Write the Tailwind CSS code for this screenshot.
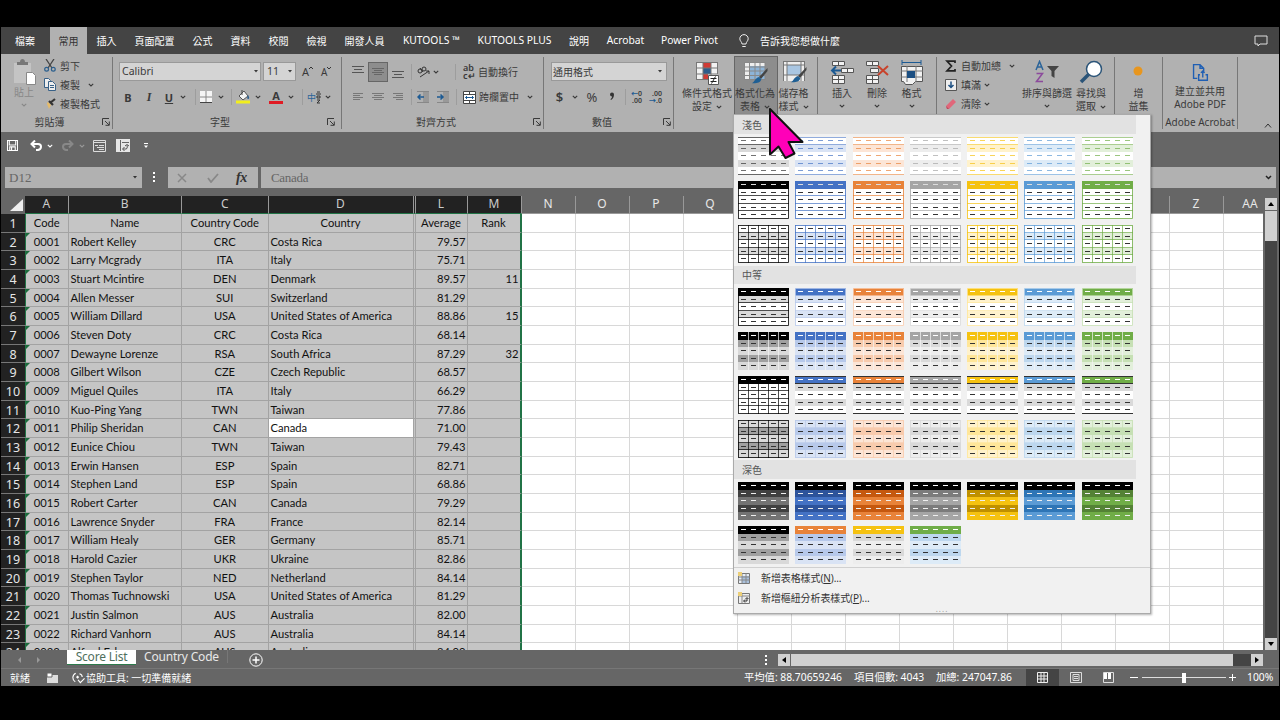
<!DOCTYPE html>
<html lang="zh-Hant">
<head>
    <meta charset="UTF-8">
    <meta name="viewport" content="width=device-width, initial-scale=1.0">
    <title>Score List</title>
    <script src="https://cdn.jsdelivr.net/npm/@tailwindcss/browser@4"></script>
</head>
<body class="bg-black overflow-hidden font-['Noto_Sans','Noto_Sans_CJK_TC',sans-serif]">
    <!-- Shared icons -->
    <svg class="hidden">
        <symbol id="chev" viewBox="0 0 6 4"><path d="M.8 .8L3 3L5.2 .8" fill="none" stroke="currentColor" stroke-width="1.1"/></symbol>
        <symbol id="launch" viewBox="0 0 8 8"><path d="M.5 7V.5H7M3 3l4 4M7.3 3.5v3.8H3.5" fill="none" stroke="currentColor"/></symbol>
        <symbol id="caret" viewBox="0 0 4 3"><path d="M0 0h4L2 2.6z" fill="currentColor"/></symbol>
        <symbol id="brush" viewBox="0 0 16 16"><path d="M15.5 0v3L9 11 7 9z" fill="#444"/><path d="M7 9l2.3 2.3C8.5 15 4 15.500 0 15.200 3 13.500 3 10 7 9z" fill="#1f5f94"/></symbol>
    </svg>

    <div class="relative w-[1280px] h-[720px] pt-[27px] pl-px overflow-hidden">
        <div class="w-[1278px] h-[659px] flex flex-col overflow-hidden bg-[#666]">

            <!-- Ribbon tabs -->
            <div class="h-[27px] shrink-0 flex items-center bg-[#444] text-white text-[10px] leading-none whitespace-nowrap text-center">
                <div class="w-[48px]">檔案</div>
                <div class="w-[37px] h-full flex items-center justify-center bg-[#b1b1b1] text-[#333] ml-px">常用</div>
                <div class="w-[39px]">插入</div>
                <div class="w-[57px]">頁面配置</div>
                <div class="w-[39px]">公式</div>
                <div class="w-[37px]">資料</div>
                <div class="w-[39px]">校閱</div>
                <div class="w-[37px]">檢視</div>
                <div class="w-[59px]">開發人員</div>
                <div class="w-[75px] text-[10.300px]">KUTOOLS ™</div>
                <div class="w-[91px] text-[10.300px]">KUTOOLS PLUS</div>
                <div class="w-[38px]">說明</div>
                <div class="w-[55px] text-[10.300px]">Acrobat</div>
                <div class="w-[73px] text-[10.300px]">Power Pivot</div>
                <svg class="w-[10px] h-[14px] ml-[13px]" viewBox="0 0 10 14" fill="none" stroke="#eee"><path d="M3 10C3 8 .8 7 .8 4.800a4.200 4.200 0 018.400 0C9.200 7 7 8 7 10zM3.300 12.500h3.400"/></svg>
                <div class="ml-[11px]">告訴我您想做什麼</div>
                <svg class="w-[14px] h-[12px] ml-auto mr-[11px]" viewBox="0 0 14 12" fill="none" stroke="#ddd"><path d="M1 1h12v8H6l-2 2V9H1z"/></svg>
            </div>

            <!-- Ribbon -->
            <div class="h-[78px] shrink-0 flex items-start pt-[3px] bg-[#b1b1b1] text-[#3a3a3a] text-[10px] leading-none whitespace-nowrap">
                <!-- Clipboard -->
                <div class="w-[112px] h-[72px] border-r border-[#777] flex flex-col">
                    <div class="flex h-[60px]">
                        <div class="w-[43px] flex flex-col items-center pl-[3px] text-[#888]">
                            <svg class="w-[23px] h-[27px] mt-[2px]" viewBox="0 0 23 27"><path d="M1 4h17v20H1z" fill="#c4c4c4"/><path d="M4 3h3c0-4 5-4 5 0h3v3H4z" fill="#777"/><path d="M13.500 13.500h6l3 3v9h-9z" fill="#fff" stroke="#888"/></svg>
                            <div class="mt-px">貼上</div>
                            <svg class="w-[6px] h-[4px] mt-[6px]"><use href="#chev"/></svg>
                        </div>
                        <div class="flex flex-col">
                            <div class="h-[17px] flex items-center">
                                <svg class="w-[12px] h-[13px]" viewBox="0 0 12 13" fill="none"><path d="M2 0l6 9M10 0L4 9" stroke="#444" stroke-width="1.300"/><circle cx="2.600" cy="10.300" r="1.900" stroke="#2b5f8e" stroke-width="1.200"/><circle cx="9.300" cy="10.300" r="1.900" stroke="#2b5f8e" stroke-width="1.200"/></svg>
                                <span class="ml-[4px]">剪下</span>
                            </div>
                            <div class="h-[21px] flex items-center">
                                <svg class="w-[12px] h-[13px]" viewBox="0 0 12 13" fill="#eee" stroke="#386187"><path d="M.5 .5h4l2 2v7h-6z"/><path d="M4.500 3.500h4l3 3v6h-7zM6 7.500h4M6 9.500h4"/></svg>
                                <span class="ml-[4px]">複製</span>
                                <svg class="w-[6px] h-[4px] ml-[8px]"><use href="#chev"/></svg>
                            </div>
                            <div class="h-[18px] flex items-center">
                                <svg class="w-[12px] h-[12px]" viewBox="0 0 12 12"><path d="M4 4l3 3-2 4C4 8 3 7 3 5z" fill="#e6bb69"/><path d="M5 3l4 4M6 5l5-4" stroke="#333" stroke-width="2.200"/></svg>
                                <span class="ml-[4px]">複製格式</span>
                            </div>
                        </div>
                    </div>
                    <div class="h-[14px] flex items-center"><span class="w-[97px] text-center">剪貼簿</span><svg class="w-[8px] h-[8px] ml-[4px]"><use href="#launch"/></svg></div>
                </div>

                <!-- Font -->
                <div class="w-[229px] h-[72px] border-r border-[#777] flex flex-col">
                    <div class="h-[30px] flex items-center pl-[6px]">
                        <div class="w-[142px] h-[19px] bg-[#d4d4d4] border border-[#999] flex items-center justify-between px-[2px] text-[10.500px]">Calibri<svg class="w-[4px] h-[3px]"><use href="#caret"/></svg></div>
                        <div class="w-[33px] h-[19px] ml-[2px] bg-[#d4d4d4] border border-[#999] flex items-center justify-between px-[3px] text-[10.500px]">11<svg class="w-[4px] h-[3px]"><use href="#caret"/></svg></div>
                        <div class="ml-[6px] w-[12px] text-[11px] flex">A<svg class="w-[4px] h-[3px]" viewBox="0 0 4 3"><path d="M0 3l2-2 2 2" fill="none" stroke="#333"/></svg></div>
                        <div class="ml-[7px] w-[12px] text-[10px] flex">A<svg class="w-[4px] h-[3px]" viewBox="0 0 4 3"><path d="M0 0l2 2 2-2" fill="none" stroke="#333"/></svg></div>
                    </div>
                    <div class="h-[23px] flex items-center pl-[6px] text-center">
                        <b class="w-[18px] text-[11px]">B</b>
                        <b class="w-[24px] text-[12px] italic font-['Liberation_Serif']">I</b>
                        <b class="w-[16px] text-[11px] underline">U</b>
                        <svg class="w-[6px] h-[4px] ml-[3px]"><use href="#chev"/></svg>
                        <i class="w-px h-[16px] bg-[#9d9d9d] ml-[9px]"></i>
                        <svg class="w-[12px] h-[12px] ml-[4px]" viewBox="0 0 12 12"><path d="M0 0h12v12H0z" fill="#f5f5f5"/><path d="M6 0v12M0 6h12" stroke="#888"/><path d="M0 11.500h12" stroke="#444"/></svg>
                        <svg class="w-[6px] h-[4px] ml-[6px]"><use href="#chev"/></svg>
                        <i class="w-px h-[16px] bg-[#9d9d9d] ml-[7px]"></i>
                        <svg class="w-[14px] h-[14px] ml-[4px]" viewBox="0 0 14 14"><path d="M3 6l5-5 4 5-5 4z" fill="#f4f4f4" stroke="#555"/><path d="M6 0v5" stroke="#444"/><path d="M12 5c2 3 1 4 0 4s-1-2 0-4" fill="#2c5f8f"/><path d="M0 10.500h14v3H0z" fill="#f2ee1c"/></svg>
                        <svg class="w-[6px] h-[4px] ml-[5px]"><use href="#chev"/></svg>
                        <div class="ml-[8px] w-[14px] h-[14px] border-b-3 border-[#e01b24] text-[11px] font-bold leading-[11px]">A</div>
                        <svg class="w-[6px] h-[4px] ml-[5px]"><use href="#chev"/></svg>
                        <i class="w-px h-[16px] bg-[#9d9d9d] ml-[8px]"></i>
                        <div class="ml-[4px] w-[14px] flex items-center text-[#2b6499] text-[9px]">中<svg class="w-[5px] h-[13px]" viewBox="0 0 5 13" fill="none" stroke="#333"><path d="M1 1h3M0 3h5M1 5h3v2H1zM1 9h3l-3 3h3"/></svg></div>
                        <svg class="w-[6px] h-[4px] ml-[4px]"><use href="#chev"/></svg>
                    </div>
                    <div class="h-[14px] mt-[7px] flex items-center"><span class="w-[214px] text-center">字型</span><svg class="w-[8px] h-[8px]"><use href="#launch"/></svg></div>
                </div>

                <!-- Alignment -->
                <div class="w-[202px] h-[72px] border-r border-[#777] flex flex-col">
                    <div class="h-[30px] flex items-center pl-[6px]">
                        <svg class="w-[20px] h-[20px]" viewBox="0 0 20 20" stroke="#555"><path d="M4 4.500h12M6 7.500h8M4 10.500h12"/></svg>
                        <div class="w-[20px] h-[20px] bg-[#8d8d8d] border border-[#666]"><svg class="w-[18px] h-[18px]" viewBox="0 0 18 18" stroke="#666"><path d="M3 5.500h12M5 7.500h8M3 9.500h12M5 11.500h8"/></svg></div>
                        <svg class="w-[20px] h-[20px]" viewBox="0 0 20 20" stroke="#555"><path d="M4 9.500h12M6 12.500h8M4 15.500h12"/></svg>
                        <i class="w-px h-[16px] bg-[#9d9d9d] ml-[3px]"></i>
                        <svg class="w-[13px] h-[12px] ml-[5px]" viewBox="0 0 13 12" fill="none" stroke="#333"><circle cx="3" cy="5" r="2"/><path d="M3 2l3 4"/><circle cx="7" cy="3" r="2"/><path d="M3 11l9-6M12 8V5H9"/></svg>
                        <svg class="w-[6px] h-[4px] ml-[3px]"><use href="#chev"/></svg>
                        <i class="w-px h-[16px] bg-[#9d9d9d] ml-[16px]"></i>
                        <div class="ml-[7px] w-[11px] text-[9px] leading-[8px] font-semibold">ab<br>c↵</div>
                        <span class="ml-[4px]">自動換行</span>
                    </div>
                    <div class="h-[23px] flex items-center pl-[6px]">
                        <svg class="w-[20px] h-[12px]" viewBox="0 0 20 12" stroke="#777"><path d="M5 2.500h10M5 4.500h7M5 6.500h10M5 8.500h7"/></svg>
                        <svg class="w-[20px] h-[12px]" viewBox="0 0 20 12" stroke="#777"><path d="M4 2.500h12M6 4.500h8M4 6.500h12M6 8.500h8"/></svg>
                        <svg class="w-[20px] h-[12px]" viewBox="0 0 20 12" stroke="#777"><path d="M5 2.500h10M8 4.500h7M5 6.500h10M8 8.500h7"/></svg>
                        <i class="w-px h-[16px] bg-[#9d9d9d] ml-[3px]"></i>
                        <svg class="w-[12px] h-[12px] ml-[5px]" viewBox="0 0 12 12"><path d="M6 0h6v12H6z" fill="#999"/><path d="M0 .5h12M0 11.500h12" stroke="#888"/><path d="M7 6H1m2.500-2.500L1 6l2.500 2.500" fill="none" stroke="#1c5a93" stroke-width="1.500"/></svg>
                        <svg class="w-[12px] h-[12px] ml-[8px]" viewBox="0 0 12 12"><path d="M6 0h6v12H6z" fill="#999"/><path d="M0 .5h12M0 11.500h12" stroke="#888"/><path d="M0 6h6M3.500 3.500L6 6 3.500 8.500" fill="none" stroke="#1c5a93" stroke-width="1.500"/></svg>
                        <i class="w-px h-[16px] bg-[#9d9d9d] ml-[7px]"></i>
                        <svg class="w-[13px] h-[13px] ml-[6px]" viewBox="0 0 13 13" fill="#fff" stroke="#444"><path d="M.5 .5h12v12H.5zM.5 3.500h12M.5 9.500h12M6.500 .5v3M6.500 9.500v3"/><path d="M2.500 6.500h8M4 5L2.500 6.500 4 8M9 5l1.500 1.500L9 8" fill="none" stroke="#1c5a93"/></svg>
                        <span class="ml-[3px]">跨欄置中</span>
                        <svg class="w-[6px] h-[4px] ml-[8px]"><use href="#chev"/></svg>
                    </div>
                    <div class="h-[14px] mt-[7px] flex items-center"><span class="w-[188px] text-center">對齊方式</span><svg class="w-[8px] h-[8px] ml-[3px]"><use href="#launch"/></svg></div>
                </div>

                <!-- Number -->
                <div class="w-[130px] h-[72px] border-r border-[#777] flex flex-col">
                    <div class="h-[30px] flex items-center pl-[7px]">
                        <div class="w-[116px] h-[19px] bg-[#d4d4d4] border border-[#999] flex items-center justify-between pl-px pr-[4px]">通用格式<svg class="w-[4px] h-[3px]"><use href="#caret"/></svg></div>
                    </div>
                    <div class="h-[23px] flex items-center pl-[7px] text-center">
                        <span class="w-[17px] text-[13px] font-semibold">$</span>
                        <svg class="w-[6px] h-[4px] ml-[4px]"><use href="#chev"/></svg>
                        <span class="w-[28px] text-[13px]">%</span>
                        <svg class="w-[12px] h-[10px]" viewBox="0 0 12 10" fill="#333"><path d="M4 2.500a2 2 0 014 0C8 5 7 7 5 8l-.5-.8C5.500 6.500 6 5.500 6 4.500 5 4.500 4 3.800 4 2.500z"/></svg>
                        <i class="w-px h-[16px] bg-[#9d9d9d] ml-[7px]"></i>
                        <div class="w-[20px] text-[7px] leading-[7px] font-semibold text-right pr-[4px]"><span class="text-[#1c5a93]">←</span>0<br>.00</div>
                        <div class="w-[20px] text-[7px] leading-[7px] font-semibold text-right pr-[4px]">.00<br><span class="text-[#1c5a93]">→</span>.0</div>
                    </div>
                    <div class="h-[14px] mt-[7px] flex items-center"><span class="w-[116px] text-center">數值</span><svg class="w-[8px] h-[8px] ml-[3px]"><use href="#launch"/></svg></div>
                </div>

                <!-- Styles -->
                <div class="w-[144px] h-[72px] border-r border-[#777] flex text-center leading-[13px]">
                    <div class="w-[60px] pl-[6px] pt-[3px] flex flex-col items-center">
                        <svg class="w-[25px] h-[25px]" viewBox="0 0 25 25"><path d="M1 2h22v18H1z" fill="#f2f2f2"/><path d="M8 2h8v6H8zM8 14h5v6H8z" fill="#cf3b35"/><path d="M8 8h8v6H8z" fill="#2d5c8b"/><path d="M1 2.500h22M1 8h22M1 14h22M1 19.500h14M1.500 2v18M8 2v18M16 2v14M22.500 2v12" stroke="#777" fill="none"/><path d="M13.500 15.500h10v9h-10z" fill="#fff" stroke="#555"/><path d="M15.500 18.500h6M15.500 21.500h6M20.500 16.500l-4 7" stroke="#222"/></svg>
                        <div class="w-[50px] mt-[2px]">條件式格式<br>設定<svg class="inline w-[6px] h-[4px] ml-[4px]"><use href="#chev"/></svg></div>
                    </div>
                    <div class="w-[44px] h-[59px] -mt-px pt-[3px] bg-[#8d8d8d] border border-[#666] flex flex-col items-center">
                        <svg class="w-[26px] h-[25px]" viewBox="0 0 26 25"><path d="M1 2h21v18H1z" fill="#eee"/><path d="M6 6h16v14H6z" fill="#8db4d8"/><path d="M1.500 2v18M6.500 2v18M12 2v18M17 2v18M22 2v18M1 2.500h21M1 7h21M1 11h21M1 15.500h21M1 19.500h21" stroke="#888" fill="none"/><use href="#brush" x="9" y="8" width="16" height="16"/></svg>
                        <div class="-ml-[2px] mt-[2px]">格式化為<br>表格<svg class="inline w-[6px] h-[4px] ml-[4px]"><use href="#chev"/></svg></div>
                    </div>
                    <div class="w-[34px] pt-[3px] flex flex-col items-center">
                        <svg class="w-[26px] h-[25px]" viewBox="0 0 26 25"><path d="M1 1h22v20H1z" fill="#eee"/><path d="M5 5h14v10H5z" fill="#a9c6e2"/><path d="M1.500 1v20M5 1v20M19 1v20M22.500 1v20M1 1.500h22M1 5h22M1 15h22" stroke="#777" fill="none"/><use href="#brush" x="9" y="7" width="16" height="16"/></svg>
                        <div class="-ml-[3px] mt-[2px]">儲存格<br>樣式<svg class="inline w-[6px] h-[4px] ml-[4px]"><use href="#chev"/></svg></div>
                    </div>
                </div>

                <!-- Cells -->
                <div class="w-[119px] h-[72px] border-r border-[#777] flex pl-[6px] text-center leading-[13px]">
                    <div class="w-[36px] pt-[3px] flex flex-col items-center">
                        <svg class="w-[24px] h-[25px]" viewBox="0 0 24 25" fill="#f2f2f2" stroke="#555"><path d="M2.500 1.500h12v4h-12zM8.500 1.500v4M2.500 15.500h12v8h-12zM8.500 15.500v8M2.500 19.500h12M11.500 8.500h12v4h-12zM17.500 8.500v4"/><path d="M11 10.500H2m4-4l-4 4 4 4" fill="none" stroke="#1c5a93" stroke-width="2"/></svg>
                        <div class="mt-[2px]">插入</div><svg class="w-[6px] h-[4px] mt-[4px]"><use href="#chev"/></svg>
                    </div>
                    <div class="w-[34px] pt-[3px] flex flex-col items-center">
                        <svg class="w-[24px] h-[25px]" viewBox="0 0 24 25" fill="#f2f2f2" stroke="#555"><path d="M1.500 1.500h12v4h-12zM7.500 1.500v4M5.500 8.500h8v4h-8zM1.500 15.500h12v8h-12zM7.500 15.500v8M1.500 19.500h12"/><path d="M13 6l10 9M23 6l-10 9" stroke="#c8432c" stroke-width="2"/></svg>
                        <div class="mt-[2px]">刪除</div><svg class="w-[6px] h-[4px] mt-[4px]"><use href="#chev"/></svg>
                    </div>
                    <div class="w-[35px] pt-[3px] flex flex-col items-center">
                        <svg class="w-[24px] h-[25px]" viewBox="0 0 24 25"><path d="M2 0v5M21 0v5M2 2.500h19" stroke="#1c5a93"/><path d="M1.500 6.500h21v15h-7l-3 3h-7l-2-3h-2z" fill="#f2f2f2" stroke="#555"/><path d="M7 6v16M16 6v16M1 11h22M1 17h22" stroke="#777"/><path d="M7 11h8v7H7z" fill="#1c4f82"/></svg>
                        <div class="mt-[2px]">格式</div><svg class="w-[6px] h-[4px] mt-[4px]"><use href="#chev"/></svg>
                    </div>
                </div>

                <!-- Editing -->
                <div class="w-[178px] h-[72px] border-r border-[#777] flex pl-[8px]">
                    <div class="w-[76px] flex flex-col">
                        <div class="h-[17px] flex items-center"><svg class="w-[12px] h-[12px]" viewBox="0 0 12 12"><path d="M10 3V1.200H2L6.500 6 2 10.800h8V9" fill="none" stroke="#222" stroke-width="1.700"/></svg><span class="ml-[4px]">自動加總</span><svg class="w-[6px] h-[4px] ml-[8px]"><use href="#chev"/></svg></div>
                        <div class="h-[21px] flex items-center"><svg class="w-[12px] h-[12px]" viewBox="0 0 12 12"><path d="M.5 .5h11v11H.5z" fill="#eee" stroke="#555"/><path d="M6 2.500v6M3.500 6L6 8.500 8.500 6" fill="none" stroke="#1c4f82" stroke-width="1.500"/></svg><span class="ml-[4px]">填滿</span><svg class="w-[6px] h-[4px] ml-[3px]"><use href="#chev"/></svg></div>
                        <div class="h-[18px] flex items-center"><svg class="w-[12px] h-[12px]" viewBox="0 0 12 12"><path d="M1 8l7-7 3 3-7 7H2z" fill="#e0677a"/><path d="M1 8l3 3H2z" fill="#b54b5e"/></svg><span class="ml-[4px]">清除</span><svg class="w-[6px] h-[4px] ml-[3px]"><use href="#chev"/></svg></div>
                    </div>
                    <div class="w-[52px] pt-[3px] flex flex-col items-center leading-[13px]">
                        <svg class="w-[26px] h-[25px]" viewBox="0 0 26 25" fill="none"><path d="M2 10L5.500 1.500 9 10M3.200 7h4.600" stroke="#2b6499" stroke-width="1.500"/><path d="M2.500 13.500h6l-6 8h6.500" stroke="#8c4a9c" stroke-width="1.500"/><path d="M13 6h12l-4.500 5v7l-3-2v-5z" fill="#444"/></svg>
                        <div class="mt-[2px]">排序與篩選</div><svg class="w-[6px] h-[4px] mt-[4px]"><use href="#chev"/></svg>
                    </div>
                    <div class="w-[36px] pt-[3px] flex flex-col items-center leading-[13px]">
                        <svg class="w-[24px] h-[25px]" viewBox="0 0 24 25"><path d="M10 14l-8 8" stroke="#2b5478" stroke-width="3.500"/><circle cx="15" cy="9" r="7.500" fill="#fff" stroke="#2b5478" stroke-width="1.500"/></svg>
                        <div class="text-center mt-[2px]">尋找與<br>選取<svg class="inline w-[6px] h-[4px] ml-[4px]"><use href="#chev"/></svg></div>
                    </div>
                </div>

                <!-- Add-ins -->
                <div class="w-[48px] h-[72px] border-r border-[#777] pt-[3px] flex flex-col items-center leading-[13px] text-center">
                    <svg class="w-[24px] h-[25px]" viewBox="0 0 24 25"><circle cx="11" cy="11" r="4.500" fill="#e8961e"/></svg>
                    <div class="mt-[2px]">增<br>益集</div>
                </div>

                <!-- Adobe Acrobat -->
                <div class="w-[75px] h-[72px] border-r border-[#777] pt-[3px] flex flex-col items-center leading-[13px] text-center">
                    <svg class="w-[18px] h-[25px]" viewBox="0 0 18 25" fill="none" stroke="#1f5fb4" stroke-width="1.500"><path d="M6 20H2V5h7l4 4v4M9 5v4h4M9 16H7.500v6H17v-6h-2M12 19v-7M10 14l2-2 2 2"/></svg>
                    <div class="mt-[2px]">建立並共用<br><span class="text-[10px]">Adobe PDF</span></div>
                    <div class="text-[10px] mt-[5px]">Adobe Acrobat</div>
                </div>
                <svg class="w-[8px] h-[5px] ml-auto mr-[7px] mt-[66px]" viewBox="0 0 8 5"><path d="M1 4.500l3-3.500 3 3.500" fill="none" stroke="#333"/></svg>
            </div>

            <!-- Quick access toolbar -->
            <div class="h-[32px] shrink-0 flex items-center pl-[6px] pb-[5px] text-white">
                <svg class="w-[11px] h-[11px]" viewBox="0 0 12 12" fill="none" stroke="#fff"><path d="M.5 .5h11v11H.5zM2.500 .5v5h7v-5M3 11.500v-4h6v4M5 8v3" stroke-width="1.200"/></svg>
                <svg class="w-[12px] h-[11px] ml-[12px]" viewBox="0 0 12 11" fill="none" stroke="#fff" stroke-width="2"><path d="M5 .5L1.500 4 5 7.500M2 4h6c4 0 4 5 0 6H6"/></svg>
                <svg class="w-[6px] h-[4px] ml-[5px]"><use href="#chev"/></svg>
                <svg class="w-[12px] h-[11px] ml-[9px]" viewBox="0 0 12 11" fill="none" stroke="#888" stroke-width="2"><path d="M7 .5L10.500 4 7 7.500M10 4H4C0 4 0 9 4 10h2"/></svg>
                <svg class="w-[6px] h-[4px] ml-[5px] text-[#999]"><use href="#chev"/></svg>
                <svg class="w-[13px] h-[12px] ml-[8px]" viewBox="0 0 13 12" fill="none" stroke="#ddd"><path d="M.5 .5h12v11H.5zM.5 2.500h12M2 5.500h3M6 5.500h5M4 7.500h7M6 9.500h5"/></svg>
                <svg class="w-[14px] h-[13px] ml-[10px]" viewBox="0 0 14 13"><path d="M0 0h14v13H0z" fill="#e6e6e6"/><path d="M4.500 1v11M6 3.500h7" stroke="#666"/><path d="M7 10h3c2 0 1-4 1-4M9 7l2-1.500L13 7M8.500 8L6.500 10l2 2" stroke="#555" fill="none"/></svg>
                <svg class="w-[6px] h-[6px] ml-[13px]" viewBox="0 0 6 6"><path d="M1 .5h4" stroke="#fff"/><path d="M1 2.500h4L3 5z" fill="#fff"/></svg>
            </div>

            <!-- Formula bar -->
            <div class="h-[32px] shrink-0 flex items-start pt-[3px] pl-[4px] text-[#666] font-['Liberation_Serif',serif] text-[13px]">
                <div class="w-[137px] h-[21px] bg-[#b1b1b1] flex items-center justify-between pl-[4px] pr-[5px]">D12<svg class="w-[4px] h-[3px] text-[#333]"><use href="#caret"/></svg></div>
                <svg class="w-[3px] h-[10px] ml-[11px] mt-[5px]" viewBox="0 0 3 10" fill="#fff"><path d="M0 0h2v2H0zM0 4h2v2H0zM0 8h2v2H0z"/></svg>
                <div class="w-[90px] h-[21px] ml-[12px] bg-[#b1b1b1] flex items-center">
                    <svg class="w-[10px] h-[10px] ml-[9px]" viewBox="0 0 10 10" stroke="#888" stroke-width="1.500"><path d="M1 1l8 8M9 1L1 9"/></svg>
                    <svg class="w-[12px] h-[10px] ml-[20px]" viewBox="0 0 12 10" fill="none" stroke="#888" stroke-width="1.800"><path d="M1 5l3 4 7-8"/></svg>
                    <span class="ml-[17px] italic font-bold text-[14px] leading-none text-[#333] tracking-[-.5px]">fx</span>
                </div>
                <div class="w-[1015px] h-[21px] ml-[3px] bg-[#b1b1b1] flex items-center justify-between pl-[10px] pr-[4px] tracking-[-.3px]">Canada<svg class="w-[7px] h-[5px] text-[#222]" viewBox="0 0 7 5"><path d="M1 1l2.500 2.500L6 1" fill="none" stroke="currentColor" stroke-width="1.500"/></svg></div>
            </div>

            <!-- Worksheet -->
            <div class="h-[454px] shrink-0 flex">
                <div class="w-[1262px] h-full overflow-hidden bg-white">
                    <div id="colHeads" class="h-[18px] w-[1300px] flex bg-[#666] text-[12px] leading-[15px]"></div>
                    <div id="rows" class="w-[1300px] font-['Lato',sans-serif]"></div>
                </div>
                <div class="w-[16px] h-full bg-[#666] pl-[2px] pt-[2px] flex flex-col">
                    <div class="w-[12px] h-[12px] bg-[#d0d0d0] flex items-center justify-center"><svg class="w-[6px] h-[4px]" viewBox="0 0 6 4"><path d="M0 4l3-4 3 4z"/></svg></div>
                    <div class="w-[12px] h-[30px] mt-px bg-[#d0d0d0]"></div>
                    <div class="w-[12px] grow bg-[#444]"></div>
                    <div class="w-[12px] h-[12px] bg-[#d0d0d0] flex items-center justify-center"><svg class="w-[6px] h-[4px]" viewBox="0 0 6 4"><path d="M0 0l3 4 3-4z"/></svg></div>
                </div>
            </div>

            <!-- Sheet tabs -->
            <div class="h-[18px] shrink-0 flex items-start text-[12px] leading-[13px] text-[#e8e8e8] whitespace-nowrap">
                <svg class="w-[4px] h-[6px] ml-[17px] mt-[7px]" viewBox="0 0 4 6" fill="#999"><path d="M3 0v6L0 3z"/></svg>
                <svg class="w-[4px] h-[6px] ml-[14px] mt-[7px]" viewBox="0 0 4 6" fill="#999"><path d="M1 0v6l3-3z"/></svg>
                <div class="w-[69px] h-[15px] ml-[27px] bg-white text-[#4f6f5d] text-center border-b border-[#2c7a4b] tracking-[-.2px]">Score List</div>
                <div class="w-[92px] text-center border-r border-[#777] tracking-[-.2px]">Country Code</div>
                <svg class="w-[14px] h-[14px] ml-[21px] mt-[3px]" viewBox="0 0 14 14" fill="none" stroke="#fff"><circle cx="7" cy="7" r="6.200"/><path d="M7 3.500v7M3.500 7h7" stroke-width="1.500"/></svg>
                <svg class="w-[3px] h-[10px] ml-[502px] mt-[5px]" viewBox="0 0 3 10" fill="#fff"><path d="M0 0h2v2H0zM0 4h2v2H0zM0 8h2v2H0z"/></svg>
                <div class="w-[12px] h-[12px] ml-[10px] mt-[4px] bg-[#d0d0d0] flex items-center justify-center"><svg class="w-[4px] h-[6px]" viewBox="0 0 4 6"><path d="M4 0v6L0 3z"/></svg></div>
                <div class="w-[442px] h-[12px] ml-px mt-[4px] bg-[#d0d0d0]"></div>
                <div class="w-[18px] h-[12px] mt-[4px] bg-[#444]"></div>
                <div class="w-[12px] h-[12px] mt-[4px] bg-[#d0d0d0] flex items-center justify-center"><svg class="w-[4px] h-[6px]" viewBox="0 0 4 6"><path d="M0 0v6l4-3z"/></svg></div>
            </div>

            <!-- Status bar -->
            <div class="h-[18px] shrink-0 flex items-center border-t border-[#777] text-[10px] leading-none text-white whitespace-nowrap">
                <span class="ml-[9px]">就緒</span>
                <svg class="w-[11px] h-[10px] ml-[17px]" viewBox="0 0 11 10"><path d="M0 2h11v8H0z" fill="#ddd"/><path d="M0 0h5v4H0z" fill="#fff" stroke="#666"/></svg>
                <svg class="w-[13px] h-[12px] ml-[14px] mr-px" viewBox="0 0 14 12" fill="none" stroke="#fff" stroke-width="1.200"><path d="M4 1C0 3 0 8 3.500 10M8 1.500c2 .5 3 2 3 3.500M6.500 8l2.500 3L13.500 6.500M6 3.500v3M4.500 5h3"/></svg>
                <span>協助工具: 一切準備就緒</span>
                <div class="ml-auto flex items-center h-full text-[10.300px]">
                    <span class="w-[110px]">平均值: 88.70659246</span>
                    <span class="w-[82px]">項目個數: 4043</span>
                    <span class="w-[90px]">加總: 247047.86</span>
                    <div class="w-[33px] h-full bg-[#444] flex items-center justify-center"><svg class="w-[11px] h-[11px]" viewBox="0 0 11 11" fill="none" stroke="#eee"><path d="M.5 .5h10v10H.5zM4 .5v10M7 .5v10M0 4h11M0 7h11"/></svg></div>
                    <div class="w-[33px] flex justify-center"><svg class="w-[12px] h-[11px]" viewBox="0 0 12 11" fill="none" stroke="#ddd"><path d="M.5 .5h11v10H.5zM3 2.500h6v6H3zM4 4.500h4M4 6.500h4"/></svg></div>
                    <div class="w-[33px] flex justify-center"><svg class="w-[11px] h-[11px]" viewBox="0 0 11 11"><path d="M.5 .5h10v10H.5z" fill="none" stroke="#ddd"/><path d="M1 1h3v6H1zM5 1h3v6H5z" fill="#fff"/></svg></div>
                    <i class="w-[8px] h-px bg-white ml-[5px]"></i>
                    <div class="w-[84px] h-px bg-[#ddd] ml-[4px] flex items-center justify-center"><i class="w-[4px] h-[10px] bg-white"></i></div>
                    <svg class="w-[7px] h-[7px] ml-[3px]" viewBox="0 0 7 7" stroke="#fff"><path d="M0 3.500h7M3.500 0v7"/></svg>
                    <span class="ml-[11px] w-[32px]">100%</span>
                </div>
            </div>
        </div>

        <!-- Table style gallery -->
        <div class="absolute left-[733px] top-[114px] w-[418px] h-[500px] bg-[#f1f1f1] border border-[#aaa] shadow-[1px_1px_2px_rgba(0,0,0,.3)] text-[10px] leading-none text-[#555]">
            <div class="w-[402px]">
                <div class="h-[19px] bg-[#e2e2e2] flex items-center pl-[8px]">淺色</div>
                <div id="light" class="pt-[3px] pl-[4px] h-[132px] grid grid-cols-[repeat(7,57.3px)] auto-rows-[44px]"></div>
                <div class="h-[18px] bg-[#e2e2e2] flex items-center pl-[8px]">中等</div>
                <div id="medium" class="pt-[4px] pl-[4px] h-[176px] grid grid-cols-[repeat(7,57.3px)] auto-rows-[44px]"></div>
                <div class="h-[19px] bg-[#e2e2e2] flex items-center pl-[8px]">深色</div>
                <div id="dark" class="pt-[3px] pl-[4px] h-[88px] grid grid-cols-[repeat(7,57.3px)] auto-rows-[44px]"></div>
            </div>
            <div class="border-t border-[#d0d0d0] text-[#333]">
                <div class="h-[20px] flex items-center pl-[4px]">
                    <svg class="w-[12px] h-[12px]" viewBox="0 0 12 12"><path d="M.5 1.500h11v10H.5z" fill="#e8eef5" stroke="#777"/><path d="M4 4h7v7H4z" fill="#a9c0dc"/><path d="M4 1v10M8 1v10M0 5h12M0 8h12" stroke="#888"/><path d="M0 0h4v4H0z" fill="#eccf78"/></svg>
                    <span class="ml-[11px] tracking-[-.1px]">新增表格樣式(<u>N</u>)...</span>
                </div>
                <div class="h-[20px] flex items-center pl-[4px]">
                    <svg class="w-[12px] h-[12px]" viewBox="0 0 12 12"><path d="M.5 1.500h11v10H.5z" fill="#eee" stroke="#777"/><path d="M4 1v10M0 4h12" stroke="#888"/><path d="M6 9h3V6M7.500 7L9 5.500 10.500 7M7 7.500L5.500 9 7 10.500" fill="none" stroke="#333"/><path d="M0 0h4v4H0z" fill="#eccf78"/></svg>
                    <span class="ml-[11px] tracking-[-.1px]">新增樞紐分析表樣式(<u>P</u>)...</span>
                </div>
                <div class="text-center text-[8px] leading-[1px] text-[#999] tracking-[1px]">....</div>
            </div>
        </div>

        <!-- Mouse pointer -->
        <svg class="absolute left-[766px] top-[105px] w-[42px] h-[58px]" viewBox="766 105 42 58"><path d="M770 109v45.500l8.500-8L785.500 158l9-4.500-6-11.500H802.500z" fill="#ff00b8" stroke="#111" stroke-width="2" stroke-linejoin="round"/></svg>
    </div>

    <script>
        // label, width, selected
        const cols = [
            ['A', 43.5, 1], ['B', 113.5, 1], ['C', 86.5, 1], ['D', 145, 1], ['', 2, 1], ['L', 52, 1], ['M', 54, 1],
            ['N', 54], ['O', 54], ['P', 54], ['Q', 54], ['R', 54], ['S', 54], ['T', 54], ['U', 54], ['V', 54],
            ['W', 54], ['X', 54], ['Y', 54], ['Z', 54], ['AA', 54]
        ];

        const data = `Code|Name|Country Code|Country|Average|Rank
0001|Robert Kelley|CRC|Costa Rica|79.57|
0002|Larry Mcgrady|ITA|Italy|75.71|
0003|Stuart Mcintire|DEN|Denmark|89.57|11
0004|Allen Messer|SUI|Switzerland|81.29|
0005|William Dillard|USA|United States of America|88.86|15
0006|Steven Doty|CRC|Costa Rica|68.14|
0007|Dewayne Lorenze|RSA|South Africa|87.29|32
0008|Gilbert Wilson|CZE|Czech Republic|68.57|
0009|Miguel Quiles|ITA|Italy|66.29|
0010|Kuo-Ping Yang|TWN|Taiwan|77.86|
0011|Philip Sheridan|CAN|Canada|71.00|
0012|Eunice Chiou|TWN|Taiwan|79.43|
0013|Erwin Hansen|ESP|Spain|82.71|
0014|Stephen Land|ESP|Spain|68.86|
0015|Robert Carter|CAN|Canada|79.29|
0016|Lawrence Snyder|FRA|France|82.14|
0017|William Healy|GER|Germany|85.71|
0018|Harold Cazier|UKR|Ukraine|82.86|
0019|Stephen Taylor|NED|Netherland|84.14|
0020|Thomas Tuchnowski|USA|United States of America|81.29|
0021|Justin Salmon|AUS|Australia|82.00|
0022|Richard Vanhorn|AUS|Australia|84.14|
0023|Alfred Faber|AUS|Australia|84.00|`.split('\n').map(r => r.split('|'));

        let head = '<div class="w-[24px] shrink-0 flex items-end justify-end pr-[2px] pb-[3px]"><svg class="w-[13px] h-[12px]" viewBox="0 0 13 12"><path d="M13 0v12H0z" fill="#eee"/></svg></div>';
        cols.forEach(c => {
            const state = c[2] ? 'bg-[#222] text-[#ccc] border-b-[#217346]' : 'text-[#e8e8e8] border-b-[#999]';
            head += `<div class="shrink-0 text-center border-r border-b border-r-[#999] ${state}" style="width:${c[1]}px">${c[0]}</div>`;
        });
        document.getElementById('colHeads').innerHTML = head;

        let html = '';
        data.forEach((r, i) => {
            html += '<div class="flex h-[18.68px] text-[11.2px] leading-[18px] text-[#111] whitespace-nowrap">';
            html += `<div class="w-[24px] shrink-0 bg-[#222] text-[#e6e6e6] text-center text-[12.500px] leading-[20px] border-b border-[#777] overflow-hidden font-['Noto_Sans']">${i + 1}</div>`;
            const vals = [r[0], r[1], r[2], r[3], '', r[4], r[5]];
            cols.forEach((c, j) => {
                if (!c[2]) {
                    html += `<div class="shrink-0 border-r border-b border-[#d8d8d8]" style="width:${c[1]}px"></div>`;
                    return;
                }
                let align = 'text-center';
                if (i > 0 && (j === 1 || j === 3)) align = 'text-left pl-[2px]';
                if (i > 0 && j > 4) align = 'text-right pr-px';
                const bg = (i === 11 && j === 3) ? 'bg-white' : 'bg-[#c5c5c5]';
                let edge = j === 6 ? 'border-r-2 border-r-[#217346]' : 'border-r border-r-[#a3a3a3]';
                if (j === 0) edge += ' border-l border-l-[#217346]';
                const mark = (j === 0 && i > 0) ? '<svg class="absolute left-0 top-0 w-[4px] h-[4px]" viewBox="0 0 4 4"><path d="M0 0h4L0 4z" fill="#1c6b3c"/></svg>' : '';
                html += `<div class="relative shrink-0 border-b border-b-[#a3a3a3] ${edge} ${bg} ${align}" style="width:${c[1]}px">${mark}${vals[j]}</div>`;
            });
            html += '</div>';
        });
        document.getElementById('rows').innerHTML = html;

        // main, light tint, mid tint, dark shade
        const theme = [
            ['#000000', '#d9d9d9', '#a0a0a0', '#404040'],
            ['#4472c4', '#d9e3f4', '#b7c9ea', '#2d539b'],
            ['#e8833a', '#fce5d6', '#f8cbad', '#c5580f'],
            ['#a5a5a5', '#ededed', '#d9d9d9', '#7b7b7b'],
            ['#f5c211', '#fff2cc', '#ffe699', '#bf9000'],
            ['#5b9bd5', '#ddebf7', '#bdd7ee', '#2e75b6'],
            ['#70ad47', '#e2efda', '#c6e0b4', '#548235']
        ];

        // f: five row fills, d: five dash colours, h: row line, v: column line, b: border
        function thumb(f, d, o) {
            const ys = [0, 8, 15, 23, 30, 38];
            let s = '<svg class="w-[51px] h-[38px]" viewBox="0 0 51 38">';
            for (let i = 0; i < 5; i++) s += `<rect x="0" y="${ys[i]}" width="51" height="${ys[i + 1] - ys[i]}" fill="${f[i]}"/>`;
            for (let i = 1; i < 5; i++) if (o.h) s += `<path d="M0 ${ys[i] - .5}h51" stroke="${o.h}" stroke-width=".7"/>`;
            if (o.v) for (let k = 1; k < 5; k++) s += `<path d="M${k * 10 + .5} 0v38" stroke="${o.v}" stroke-width=".7"/>`;
            if (o.b) s += `<rect x=".5" y=".5" width="50" height="37" fill="none" stroke="${o.b}" stroke-width=".8"/>`;
            if (o.top) s += `<path d="M0 .5h51M0 37.500h51M0 7.500h51" stroke="${o.top}" stroke-width="${o.tw || 1}"/>`;
            for (let i = 0; i < 5; i++)
                for (let k = 0; k < 5; k++) s += `<path d="M${3 + k * 10} ${ys[i] + 3.5}h5" stroke="${d[i]}" stroke-width="${o.dw || 1}"/>`;
            return s + '</svg>';
        }

        const W = '#fff', K = '#333';
        const dashes = h => [h, K, K, K, K];
        let light = '', medium = '', dark = '';
        theme.forEach(([c, t]) => { light += thumb([W, t, W, t, W], c === '#000000' ? dashes(K) : [c, c, c, c, c], { top: c, tw: .6, dw: .7 }); });
        theme.forEach(([c]) => { light += thumb([c, W, W, W, W], dashes('#ddd'), { h: c, b: c }); });
        theme.forEach(([c, t]) => { light += thumb([W, t, W, t, W], dashes(K), { h: c, v: c, b: c }); });
        theme.forEach(([c, t, m], i) => { medium += thumb([c, t, W, t, W], dashes(W), { h: i ? m : c, b: i ? m : c }); });
        theme.forEach(([c, t, m]) => { medium += thumb([c, m, t, m, t], dashes(W), { v: '#f4f4f4' }); });
        theme.forEach(([c], i) => { medium += i ? thumb([c, '#d9d9d9', W, '#d9d9d9', W], dashes(W), { top: '#333' }) : thumb([c, W, W, W, W], dashes(W), { h: c, v: c, b: c }); });
        theme.forEach(([c, t, m], i) => { medium += thumb([t, m, t, m, t], dashes(K), { h: i ? m : c, v: i ? m : c, b: i ? m : c }); });
        theme.forEach(([c, t, m, s], i) => {
            const a = i ? c : '#737373';
            dark += thumb(['#000', s, a, s, a], ['#fff', '#eee', '#eee', '#eee', '#eee'], {});
        });
        [['#000', 0], ['#e8833a', 1], ['#f5c211', 3], ['#70ad47', 5]].forEach(([h, i]) => {
            dark += thumb([h, theme[i][2], theme[i][1], theme[i][2], theme[i][1]], dashes(W), {});
        });
        document.getElementById('light').innerHTML = light;
        document.getElementById('medium').innerHTML = medium;
        document.getElementById('dark').innerHTML = dark;
    </script>
</body>
</html>
